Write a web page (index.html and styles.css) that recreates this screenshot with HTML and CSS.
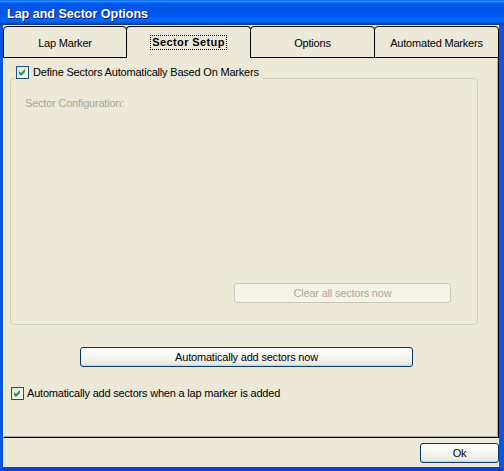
FILE: index.html
```html
<!DOCTYPE html>
<html>
<head>
<meta charset="utf-8">
<link rel="stylesheet" href="styles.css">
</head>
<body>
<div class="window">
  <div class="titlebar"><span class="title">Lap and Sector Options</span></div>
  <div class="client">
    <div class="tabs">
      <div class="tab">Lap Marker</div>
      <div class="tab active"><span class="focus">Sector Setup</span></div>
      <div class="tab">Options</div>
      <div class="tab">Automated Markers</div>
    </div>
    <div class="panel">
      <div class="group">
        <label class="legend">
          <span class="check"><svg width="11" height="11" viewBox="0 0 11 11"><polygon points="2,4 4,6 8,2 8,5 4,9 2,7" fill="#21a121"/></svg></span>
          <span class="label">Define Sectors Automatically Based On Markers</span>
        </label>
        <div class="caption">Sector Configuration:</div>
        <button class="btn disabled clear">Clear all sectors now</button>
      </div>
      <button class="btn add">Automatically add sectors now</button>
      <label class="checkrow">
        <span class="check"><svg width="11" height="11" viewBox="0 0 11 11"><polygon points="2,4 4,6 8,2 8,5 4,9 2,7" fill="#21a121"/></svg></span>
        <span class="label">Automatically add sectors when a lap marker is added</span>
      </label>
    </div>
    <div class="footer">
      <button class="btn ok">Ok</button>
    </div>
  </div>
</div>
</body>
</html>
```

FILE: styles.css
```css
html, body {
  margin: 0;
  padding: 0;
  background: #ece9d8;
}

.window {
  width: 504px;
  height: 471px;
  display: flex;
  flex-direction: column;
  font-family: "Liberation Sans", Arial, sans-serif;
  font-size: 11px;
  color: #000;
}

.titlebar {
  height: 25px;
  box-sizing: border-box;
  padding: 3px 0 0 7px;
  line-height: 22px;
  background: linear-gradient(180deg, #0058ee 0%, #3593ff 4%, #288eff 6%, #127dff 8%, #036ffc 10%, #0262ee 14%, #0057e5 20%, #0054e3 24%, #0055eb 56%, #005bf5 66%, #026afe 76%, #0062ef 86%, #0052d6 92%, #0040ab 96%, #003092 100%);
}

.title {
  color: #fff;
  font-weight: bold;
  font-size: 12.5px;
  text-shadow: 1px 1px 0 #0f1f7a;
}

.client {
  height: 446px;
  box-sizing: border-box;
  border-left: 3px solid #0a55e6;
  border-right: 5px solid #0a55e6;
  border-bottom: 4px solid #0842d6;
  background: #ece9d8;
  display: flex;
  flex-direction: column;
  letter-spacing: -0.2px;
}

.tabs {
  margin-top: 1px;
  height: 32px;
  display: grid;
  grid-template-columns: repeat(4, 1fr);
}

.tab {
  box-sizing: border-box;
  border: 1px solid #000;
  border-radius: 4px 4px 0 0;
  background: #ece9d8;
  display: flex;
  justify-content: center;
  align-items: flex-start;
  padding-top: 10px;
  line-height: 13px;
  white-space: nowrap;
}

.tab + .tab {
  margin-left: -1px;
}

.tab.active {
  border-bottom: none;
  padding-top: 8px;
  font-weight: bold;
  letter-spacing: 0.4px;
}

.focus {
  border: 1px dotted #000;
  padding: 0 1px;
  line-height: 13px;
}

.panel {
  height: 380px;
  box-sizing: border-box;
  border-left: 1px solid #fff;
  border-right: 1px solid #000;
  border-bottom: 1px solid #000;
  box-shadow: inset -1px -1px 0 #aca899;
  display: flex;
  flex-direction: column;
  align-items: flex-start;
}

.group {
  margin: 20px 0 0 6px;
  width: 468px;
  height: 247px;
  box-sizing: border-box;
  border: 1px solid #d0d0bf;
  border-radius: 4px;
  display: flex;
  flex-direction: column;
  align-items: flex-start;
}

.legend {
  margin: -13px 0 0 4px;
  padding: 0 4px 0 1px;
  background: #ece9d8;
  display: flex;
  align-items: center;
  gap: 4px;
  height: 13px;
  line-height: 13px;
}

.check {
  width: 13px;
  height: 13px;
  box-sizing: border-box;
  border: 1px solid #1c5180;
  background: linear-gradient(135deg, #dcdcd7 0%, #ffffff 100%);
  display: block;
  flex: none;
}

.check svg {
  display: block;
}

.caption {
  margin: 18px 0 0 14px;
  line-height: 13px;
  color: #aca899;
}

.btn {
  font: inherit;
  letter-spacing: inherit;
  display: block;
  box-sizing: border-box;
  height: 20px;
  padding: 1px 0 0 0;
  line-height: 17px;
  border: 1px solid #003c74;
  border-radius: 3px;
  background: linear-gradient(180deg, #ffffff 0%, #f4f3ee 60%, #ecebe6 86%, #d6d0c5 100%);
  color: #000;
  text-align: center;
}

.btn.disabled {
  border-color: #c9c7ba;
  background: #f5f4ea;
  color: #aca899;
}

.clear {
  margin: auto 0 21px 223px;
  width: 217px;
}

.add {
  margin: 22px 0 0 76px;
  width: 333px;
}

.checkrow {
  margin: 20px 0 0 7px;
  display: flex;
  align-items: center;
  gap: 3px;
  height: 13px;
  line-height: 13px;
}

.footer {
  height: 29px;
  box-sizing: border-box;
  padding-top: 5px;
  display: flex;
  justify-content: flex-end;
}

.ok {
  width: 79px;
}
```
